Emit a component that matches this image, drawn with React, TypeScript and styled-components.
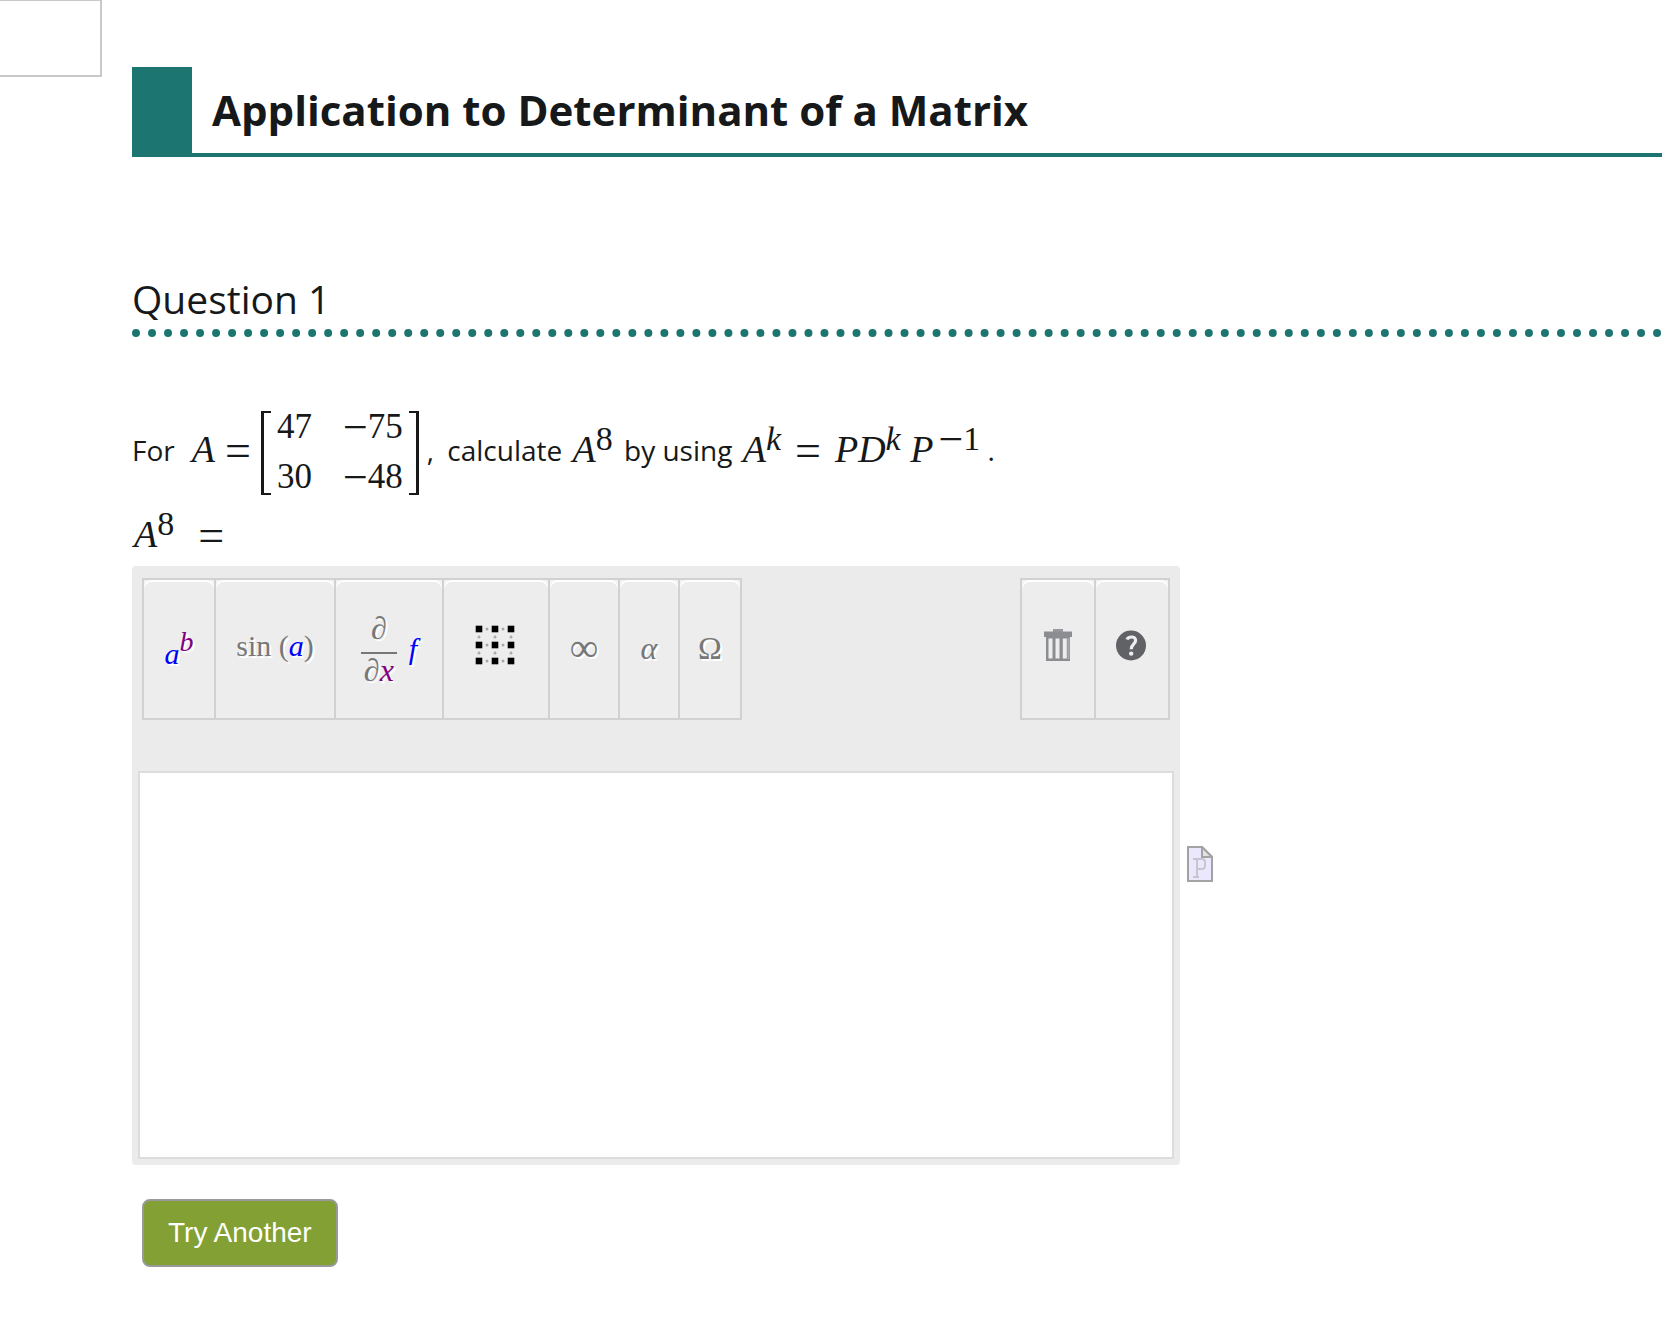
import React from "react";
import styled, { createGlobalStyle, css } from "styled-components";

const teal = "#1c7571";
const ink = "#161819";
const sans = '"Open Sans", "Noto Sans", sans-serif';
const serif = '"Liberation Serif", "Times New Roman", serif';

const GlobalStyle = createGlobalStyle`
  *, *::before, *::after { box-sizing: border-box; }
  body {
    margin: 0;
    background: #fff;
    color: ${ink};
    font-family: ${sans};
    overflow-x: hidden;
  }
`;

const Page = styled.div`
  display: grid;
  grid-template-columns: 132px minmax(0, 1fr);
  align-items: start;
`;

const CornerPanel = styled.aside`
  width: 102px;
  height: 77px;
  border: solid #c9c9c9;
  border-width: 1px 2px 2px 0;
`;

const Main = styled.main`
  padding-top: 67px;
`;

const TitleBar = styled.header`
  height: 90px;
  display: flex;
  align-items: center;
  border-left: 60px solid ${teal};
  border-bottom: 4px solid ${teal};
`;

const Title = styled.h1`
  margin: 0;
  padding-left: 20px;
  font-size: 42px;
  line-height: 58px;
  font-weight: 700;
`;

const QuestionHeading = styled.h2`
  margin: 115px 0 0;
  padding-bottom: 3px;
  border-bottom: 8px dotted ${teal};
  font-size: 39px;
  line-height: 54px;
  font-weight: 400;
`;

const Prompt = styled.p`
  margin: 74px 0 0;
  font-size: 28px;
  line-height: 40px;
`;

const AnswerLine = styled.p`
  margin: 14px 0 0;
  padding: 0 0 5px 2px;
  font-size: 28px;
  line-height: 52px;
`;

const Math = styled.span<{ $before?: number; $after?: number }>`
  font-family: ${serif};
  font-size: 38px;
  line-height: 40px;
  vertical-align: -1px;
  white-space: nowrap;
  margin-left: ${(p) => p.$before ?? 0}px;
  margin-right: ${(p) => p.$after ?? 0}px;
`;

const Sup = styled.sup`
  font-size: 34px;
  line-height: 0;
  vertical-align: 12px;
`;

const Relation = styled.span<{ $gap: number }>`
  margin: 0 ${(p) => p.$gap}px;
  font-size: 46px;
  line-height: 0;
  vertical-align: -4px;
`;

const Minus = styled.span<{ $before?: number }>`
  margin-left: ${(p) => p.$before ?? 0}px;
  font-size: 44px;
  line-height: 0;
  vertical-align: -4px;
`;

const Comma = styled.span`
  margin-right: 6px;
`;

const Matrix = styled.span`
  position: relative;
  display: inline-block;
  vertical-align: middle;
  padding: 0 16px;
  margin-right: 8px;

  &::before,
  &::after {
    content: "";
    position: absolute;
    top: 0;
    bottom: 0;
    width: 10px;
    border: solid ${ink};
    border-width: 2px 3px;
  }
  &::before {
    left: 0;
    border-right: 0;
  }
  &::after {
    right: 0;
    border-left: 0;
  }
`;

const MatrixGrid = styled.span`
  display: grid;
  grid-template-columns: auto auto;
  column-gap: 31px;
  grid-auto-rows: 50px;
  height: 84px;
  align-content: center;
  justify-items: center;
  font-family: ${serif};
  font-size: 35px;
  line-height: 48px;
`;

const AnswerRow = styled.div`
  display: flex;
  align-items: center;
  gap: 7px;
`;

const Editor = styled.div`
  width: 1048px;
  padding: 12px 6px 6px;
  border-radius: 4px;
  background: #ebebeb;
`;

const Toolbar = styled.div`
  display: flex;
  justify-content: space-between;
  padding: 0 4px;
`;

const ToolGroup = styled.div`
  display: flex;
  border: 2px solid #d1d1d1;
`;

const Tool = styled.button<{ $width: number }>`
  width: ${(p) => p.$width}px;
  height: 138px;
  padding: 0 0 8px;
  display: flex;
  align-items: center;
  justify-content: center;
  border: 0;
  border-radius: 8px 8px 0 0;
  box-shadow: inset 0 2px 0 #fff;
  background: #ededed;
  color: #777;
  font-family: ${serif};
  font-size: 30px;
  line-height: 32px;
  text-shadow: 2px 2px 0 #fff;
  white-space: nowrap;
  cursor: pointer;
`;

const Cell = styled.div`
  background: #f3f3f3;
  & + & {
    border-left: 2px solid #d1d1d1;
  }
`;

const Var = styled.i<{ $tone?: "blue" | "purple" }>`
  ${(p) => p.$tone === "blue" && css`color: #00f;`}
  ${(p) => p.$tone === "purple" && css`color: #800080;`}
`;

const Power = styled.sup`
  font-size: 28px;
  line-height: 0;
  vertical-align: 13px;
`;

const Formula = styled.span<{ $drop?: number }>`
  padding-top: ${(p) => p.$drop ?? 0}px;
`;

const Derivative = styled.span`
  display: flex;
  align-items: center;
  gap: 12px;
  padding-top: 8px;
`;

const Fraction = styled.span`
  display: grid;
  justify-items: center;
  width: 36px;
  font-size: 32px;
  line-height: 32px;
`;

const Numerator = styled.span`
  width: 100%;
  padding-bottom: 8px;
  border-bottom: 2px solid #777;
`;

const Symbol = styled.span<{ $size: number }>`
  font-size: ${(p) => p.$size}px;
  padding-top: 6px;
`;

const AnswerBox = styled.textarea`
  display: block;
  width: 100%;
  height: 388px;
  margin-top: 51px;
  padding: 12px;
  resize: none;
  border: 2px solid #dcdcdc;
  border-radius: 0;
  outline: 0;
  background: #fff;
  font-family: ${serif};
  font-size: 36px;
`;

const PreviewLink = styled.a`
  display: block;
  height: 40px;
`;

const TryAnother = styled.button`
  display: block;
  height: 68px;
  margin: 34px 0 59px 10px;
  padding: 0 24px;
  border: 2px solid #999;
  border-radius: 8px;
  background: #82a033;
  color: #fff;
  font-family: "Liberation Sans", Arial, sans-serif;
  font-size: 28px;
  line-height: 32px;
  cursor: pointer;
`;

const steps = [0, 1, 2];

function MatrixIcon() {
  return (
    <svg width="42" height="40" viewBox="0 0 42 40" aria-hidden="true">
      {steps.map((r) =>
        steps.map((c) => (
          <rect key={`${r}-${c}`} x={c * 16 + 0.7} y={r * 16 + 0.7} width="6.6" height="6.6" fill="#000" />
        ))
      )}
      {steps.map((r) =>
        [0, 1].map((c) => (
          <React.Fragment key={`${r}-${c}`}>
            <circle cx={c * 16 + 12} cy={r * 16 + 4} r="1.5" fill="#aaa" />
            <circle cx={r * 16 + 4} cy={c * 16 + 12} r="1.5" fill="#aaa" />
          </React.Fragment>
        ))
      )}
    </svg>
  );
}

function TrashIcon() {
  return (
    <svg width="28" height="32" viewBox="0 0 28 32" aria-hidden="true">
      <path d="M9 0h10v3H9z" fill="#97999c" />
      <path d="M0 2.5h28V8H0z" fill="#8b8d90" />
      <path d="M2 8h24v24H2z" fill="#8b8d90" />
      <path d="M4.5 9.5h4v20h-4zM11.5 9.5h4v20h-4zM18.8 9.5h4v20h-4z" fill="#ededed" />
      <path d="M23.5 9h2v21h-2z" fill="#a9abad" />
    </svg>
  );
}

function HelpIcon() {
  return (
    <svg width="32" height="31" viewBox="0 0 32 31" aria-hidden="true">
      <circle cx="15" cy="15.5" r="15" fill="#616266" />
      <path d="M11 9.5C12 6.8 19.6 5.3 19.6 10.3c0 4-4.4 3.7-4.4 8.9" fill="none" stroke="#ededed" strokeWidth="3.2" />
      <circle cx="15.2" cy="23.6" r="2.2" fill="#ededed" />
    </svg>
  );
}

function PreviewIcon() {
  return (
    <svg width="26" height="36" viewBox="0 0 26 36" aria-hidden="true">
      <path d="M1 1h14l10 10v24H1z" fill="#ebe8fd" stroke="#a3a3a3" strokeWidth="2" />
      <path d="M15 1v10h10z" fill="#e2e2e4" stroke="#a3a3a3" strokeWidth="2" />
      <path d="M6 13h9q3 0 3 4v3q0 3-3 3h-5M10 13v18M6 31h6" fill="none" stroke="#c6c5d0" strokeWidth="2" />
    </svg>
  );
}

export default function App() {
  return (
    <>
      <GlobalStyle />
      <Page>
        <CornerPanel />
        <Main>
          <TitleBar>
            <Title>Application to Determinant of a Matrix</Title>
          </TitleBar>

          <QuestionHeading>Question 1</QuestionHeading>

          <Prompt>
            For
            <Math $before={17}>
              <Var>A</Var>
              <Relation $gap={10}>=</Relation>
            </Math>
            <Matrix>
              <MatrixGrid>
                <span>47</span>
                <span>
                  <Minus>−</Minus>75
                </span>
                <span>30</span>
                <span>
                  <Minus>−</Minus>48
                </span>
              </MatrixGrid>
            </Matrix>
            <Comma>,</Comma> calculate{" "}
            <Math $before={3} $after={4}>
              <Var>A</Var>
              <Sup>8</Sup>
            </Math>{" "}
            by using{" "}
            <Math $before={3}>
              <Var>A</Var>
              <Sup>
                <Var>k</Var>
              </Sup>
              <Relation $gap={14}>=</Relation>
              <Var>PD</Var>
              <Sup>
                <Var>k</Var>
              </Sup>{" "}
              <Var>P</Var>
              <Sup>
                <Minus $before={5}>−</Minus>1
              </Sup>
            </Math>{" "}
            .
          </Prompt>

          <AnswerLine>
            <Math>
              <Var>A</Var>
              <Sup>8</Sup>
              <Relation $gap={24}>=</Relation>
            </Math>
          </AnswerLine>

          <AnswerRow>
            <Editor>
              <Toolbar role="toolbar" aria-label="Equation editor">
                <ToolGroup>
                  <Cell>
                    <Tool $width={70} type="button" aria-label="Exponent">
                      <Formula $drop={18}>
                        <Var $tone="blue">a</Var>
                        <Power>
                          <Var $tone="purple">b</Var>
                        </Power>
                      </Formula>
                    </Tool>
                  </Cell>
                  <Cell>
                    <Tool $width={118} type="button" aria-label="Functions">
                      <Formula $drop={2}>
                        sin (<Var $tone="blue">a</Var>)
                      </Formula>
                    </Tool>
                  </Cell>
                  <Cell>
                    <Tool $width={106} type="button" aria-label="Calculus">
                      <Derivative>
                        <Fraction>
                          <Numerator>∂</Numerator>
                          <span>
                            ∂<Var $tone="purple">x</Var>
                          </span>
                        </Fraction>
                        <Var $tone="blue">f</Var>
                      </Derivative>
                    </Tool>
                  </Cell>
                  <Cell>
                    <Tool $width={104} type="button" aria-label="Matrix">
                      <MatrixIcon />
                    </Tool>
                  </Cell>
                  <Cell>
                    <Tool $width={68} type="button" aria-label="Infinity">
                      <Symbol $size={40}>∞</Symbol>
                    </Tool>
                  </Cell>
                  <Cell>
                    <Tool $width={58} type="button" aria-label="Greek lower case">
                      <Symbol $size={32}>
                        <Var>α</Var>
                      </Symbol>
                    </Tool>
                  </Cell>
                  <Cell>
                    <Tool $width={60} type="button" aria-label="Greek upper case">
                      <Symbol $size={32}>Ω</Symbol>
                    </Tool>
                  </Cell>
                </ToolGroup>
                <ToolGroup>
                  <Cell>
                    <Tool $width={72} type="button" aria-label="Clear">
                      <TrashIcon />
                    </Tool>
                  </Cell>
                  <Cell>
                    <Tool $width={72} type="button" aria-label="Help">
                      <HelpIcon />
                    </Tool>
                  </Cell>
                </ToolGroup>
              </Toolbar>
              <AnswerBox aria-label="Answer" />
            </Editor>
            <PreviewLink href="#preview" aria-label="Preview">
              <PreviewIcon />
            </PreviewLink>
          </AnswerRow>

          <TryAnother type="button">Try Another</TryAnother>
        </Main>
      </Page>
    </>
  );
}
